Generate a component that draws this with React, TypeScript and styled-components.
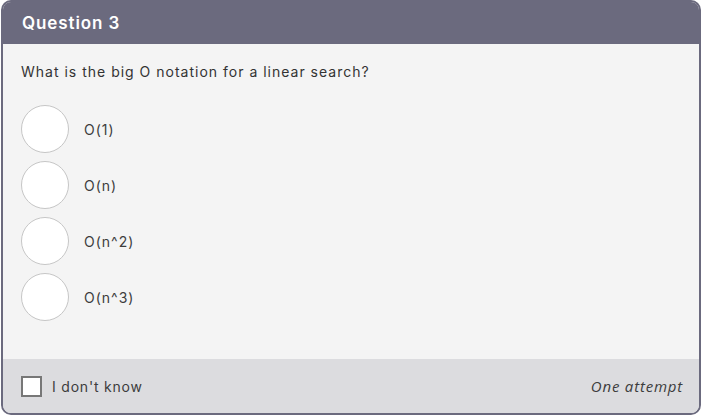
import React, { useState } from 'react';
import styled, { createGlobalStyle } from 'styled-components';

const GlobalStyle = createGlobalStyle`
  body {
    margin: 0;
    background: #ffffff;
    font-family: Inter, "Noto Sans", sans-serif;
  }
`;

const Card = styled.div`
  width: 700px;
  height: 415px;
  margin-left: 1px;
  box-sizing: border-box;
  border: 2px solid #6b6a7e;
  border-radius: 10px;
  overflow: hidden;
  display: flex;
  flex-direction: column;
  background: #f4f4f4;
`;

const Header = styled.div`
  height: 42px;
  flex: none;
  background: #6b6a7e;
  color: #ffffff;
  font-size: 17px;
  font-weight: 600;
  letter-spacing: 0.9px;
  display: flex;
  align-items: center;
  padding-left: 19px;
`;

const Body = styled.div`
  flex: 1;
  padding: 19px 0 0 18px;
  display: flex;
  flex-direction: column;
`;

const Prompt = styled.div`
  font-size: 14px;
  line-height: 18px;
  letter-spacing: 1px;
  color: #333333;
  margin-bottom: 24px;
`;

const Options = styled.div`
  display: flex;
  flex-direction: column;
  gap: 8px;
`;

const Option = styled.label`
  display: flex;
  align-items: center;
  gap: 15px;
  cursor: pointer;
  font-size: 14px;
  letter-spacing: 1px;
  color: #3d3d3d;
`;

const Radio = styled.span<{ $checked: boolean }>`
  width: 48px;
  height: 48px;
  box-sizing: border-box;
  border-radius: 50%;
  border: 1.5px solid #c6c6c6;
  background: ${p => (p.$checked ? '#6b6a7e' : '#ffffff')};
  flex: none;
`;

const Footer = styled.div`
  height: 54px;
  flex: none;
  background: #dcdcdf;
  display: flex;
  align-items: center;
  justify-content: space-between;
  padding: 0 16px 0 18px;
`;

const DontKnow = styled.label`
  display: flex;
  align-items: center;
  gap: 10px;
  font-size: 14px;
  letter-spacing: 0.8px;
  color: #3d3d3d;
  cursor: pointer;
`;

const Box = styled.span<{ $checked: boolean }>`
  width: 21px;
  height: 21px;
  box-sizing: border-box;
  border: 2px solid #777777;
  background: ${p => (p.$checked ? '#6b6a7e' : '#ffffff')};
`;

const Attempts = styled.span`
  font-family: "Open Sans", sans-serif;
  font-style: italic;
  font-size: 15px;
  letter-spacing: 0.8px;
  color: #3d3d3d;
`;

const answers = ['O(1)', 'O(n)', 'O(n^2)', 'O(n^3)'];

export default function App() {
  const [picked, setPicked] = useState<number | null>(null);
  const [unsure, setUnsure] = useState<boolean>(false);

  return (
    <>
      <GlobalStyle />
      <Card>
        <Header>Question 3</Header>
        <Body>
          <Prompt>What is the big O notation for a linear search?</Prompt>
          <Options>
            {answers.map((a, i) => (
              <Option key={a} onClick={() => setPicked(i)}>
                <Radio $checked={picked === i} />
                {a}
              </Option>
            ))}
          </Options>
        </Body>
        <Footer>
          <DontKnow onClick={() => setUnsure(!unsure)}>
            <Box $checked={unsure} />
            I don't know
          </DontKnow>
          <Attempts>One attempt</Attempts>
        </Footer>
      </Card>
    </>
  );
}
